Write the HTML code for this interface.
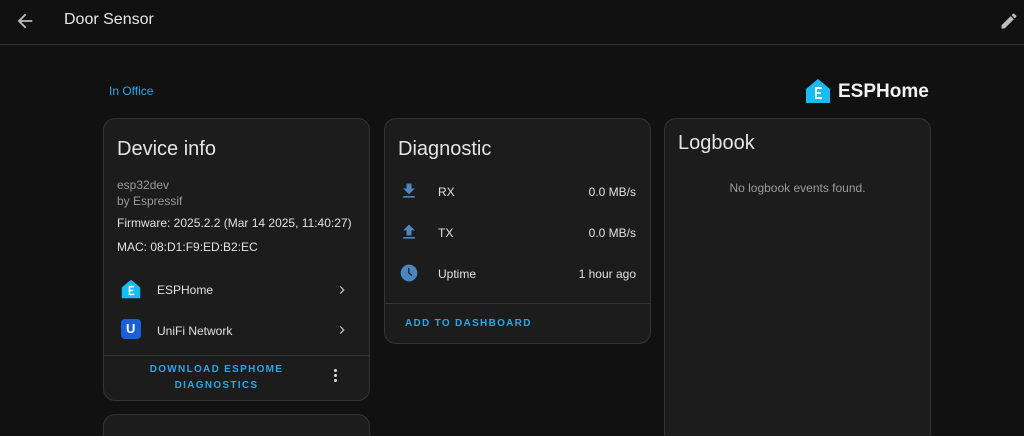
<!DOCTYPE html>
<html><head><meta charset="utf-8"><style>
*{box-sizing:border-box;margin:0;padding:0}
html,body{width:1024px;height:436px;overflow:hidden}
body{background:#111111;font-family:"Liberation Sans",sans-serif;color:#e1e1e1}
#w{position:relative;width:1024px;height:436px;overflow:hidden}
.hdr{position:absolute;left:0;top:0;width:1024px;height:45px;background:#111;border-bottom:1px solid #2e2e2e}
.card{position:absolute;background:#1c1c1c;border:1px solid #343434;border-radius:12px}
.cut{border-bottom:none;border-bottom-left-radius:0;border-bottom-right-radius:0}
.t{position:absolute;white-space:nowrap}
.sec{color:#9b9b9b;font-size:12px}
.btn{color:#2aa6e6;font-size:10px;font-weight:bold;letter-spacing:1.3px;text-align:center}
</style></head><body><div id="w">
<div class="hdr">
<svg class="t" style="left:14px;top:10px" width="22" height="22" viewBox="0 0 24 24"><path d="M20 11H7.8l5.6-5.6L12 4l-8 8 8 8 1.4-1.4L7.8 13H20z" fill="#bdbdbd"/></svg>
<div class="t" style="left:64px;top:11px;font-size:16px;color:#e8e8e8">Door Sensor</div>
<svg class="t" style="left:999px;top:11px" width="20" height="20" viewBox="0 0 24 24"><path d="M3 17.25V21h3.75L17.8 9.94l-3.75-3.75zM20.7 7.04a1 1 0 000-1.41l-2.34-2.34a1 1 0 00-1.41 0l-1.830 1.83 3.75 3.75z" fill="#bdbdbd"/></svg>
</div>
<div class="t" style="left:109px;top:84px;font-size:12px;color:#2aa6e6">In Office</div>
<svg class="t" style="left:805px;top:78px" width="26" height="26" viewBox="0 0 26 26"><path d="M13 1L1 11v14h24V11z" fill="#18bcf2"/><path d="M10 9h7v2h-5v3h4v2h-4v3h5v2h-7z" fill="#fff"/></svg>
<div class="t" style="left:838px;top:81px;font-size:19px;font-weight:bold;color:#f2f2f2">ESPHome</div>

<div class="card" style="left:103px;top:118px;width:267px;height:283px">
<div class="t" style="left:13px;top:19px;font-size:20px;color:#e4e4e4">Device info</div>
<div class="t sec" style="left:13px;top:59px">esp32dev</div>
<div class="t sec" style="left:13px;top:75px">by Espressif</div>
<div class="t" style="left:13px;top:97px;font-size:12px">Firmware: 2025.2.2 (Mar 14 2025, 11:40:27)</div>
<div class="t" style="left:13px;top:121px;font-size:12px">MAC: 08:D1:F9:ED:B2:EC</div>
<svg class="t" style="left:17px;top:160px" width="20" height="20" viewBox="0 0 26 26"><path d="M13 1L1 11v14h24V11z" fill="#18bcf2"/><path d="M10 9h7v2h-5v3h4v2h-4v3h5v2h-7z" fill="#fff"/></svg>
<div class="t" style="left:53px;top:164px;font-size:12px">ESPHome</div>
<svg class="t" style="left:230px;top:163px" width="16" height="16" viewBox="0 0 24 24"><path d="M8.6 16.6L13.2 12 8.6 7.4 10 6l6 6-6 6z" fill="#bbb"/></svg>
<div class="t" style="left:17px;top:200px;width:20px;height:20px;border-radius:4px;background:#1b5fd8"></div>
<div class="t" style="left:22px;top:202px;font-size:13px;font-weight:bold;color:#fff">U</div>
<div class="t" style="left:53px;top:205px;font-size:12px">UniFi Network</div>
<svg class="t" style="left:230px;top:203px" width="16" height="16" viewBox="0 0 24 24"><path d="M8.6 16.6L13.2 12 8.6 7.4 10 6l6 6-6 6z" fill="#bbb"/></svg>
<div class="t" style="left:0;top:236px;width:265px;border-top:1px solid #343434"></div>
<div class="t btn" style="left:30px;top:243px;width:165px;line-height:16px">DOWNLOAD ESPHOME<br>DIAGNOSTICS</div>
<div class="t" style="left:230px;top:250px;width:3px;height:3px;border-radius:2px;background:#ddd;box-shadow:0 5px 0 #ddd,0 10px 0 #ddd"></div>
</div>
<div class="card cut" style="left:103px;top:414px;width:267px;height:22px"></div>

<div class="card" style="left:384px;top:118px;width:267px;height:226px">
<div class="t" style="left:13px;top:19px;font-size:20px;color:#e4e4e4">Diagnostic</div>
<svg class="t" style="left:14px;top:62px" width="20" height="20" viewBox="0 0 24 24"><path d="M5 20h14v-2H5zM19 9h-4V3H9v6H5l7 7z" fill="#4a86c0"/></svg>
<div class="t" style="left:53px;top:66px;font-size:12px">RX</div>
<div class="t" style="right:14px;top:66px;font-size:12px">0.0 MB/s</div>
<svg class="t" style="left:14px;top:103px" width="20" height="20" viewBox="0 0 24 24"><path d="M5 20h14v-2H5zM9 16h6v-6h4l-7-7-7 7h4z" fill="#4a86c0"/></svg>
<div class="t" style="left:53px;top:107px;font-size:12px">TX</div>
<div class="t" style="right:14px;top:107px;font-size:12px">0.0 MB/s</div>
<svg class="t" style="left:14px;top:144px" width="20" height="20" viewBox="0 0 24 24"><circle cx="12" cy="12" r="10" fill="#4a86c0"/><path d="M11 6h1.5v5.5l3.5 3-1 1.2-4-3.5z" fill="#1c1c1c"/></svg>
<div class="t" style="left:53px;top:148px;font-size:12px">Uptime</div>
<div class="t" style="right:14px;top:148px;font-size:12px">1 hour ago</div>
<div class="t" style="left:0;top:184px;width:265px;border-top:1px solid #343434"></div>
<div class="t btn" style="left:20px;top:199px">ADD TO DASHBOARD</div>
</div>

<div class="card cut" style="left:664px;top:118px;width:267px;height:318px">
<div class="t" style="left:13px;top:13px;font-size:20px;color:#e4e4e4">Logbook</div>
<div class="t sec" style="left:0;width:265px;text-align:center;top:62px">No logbook events found.</div>
</div>
</div></body></html>
